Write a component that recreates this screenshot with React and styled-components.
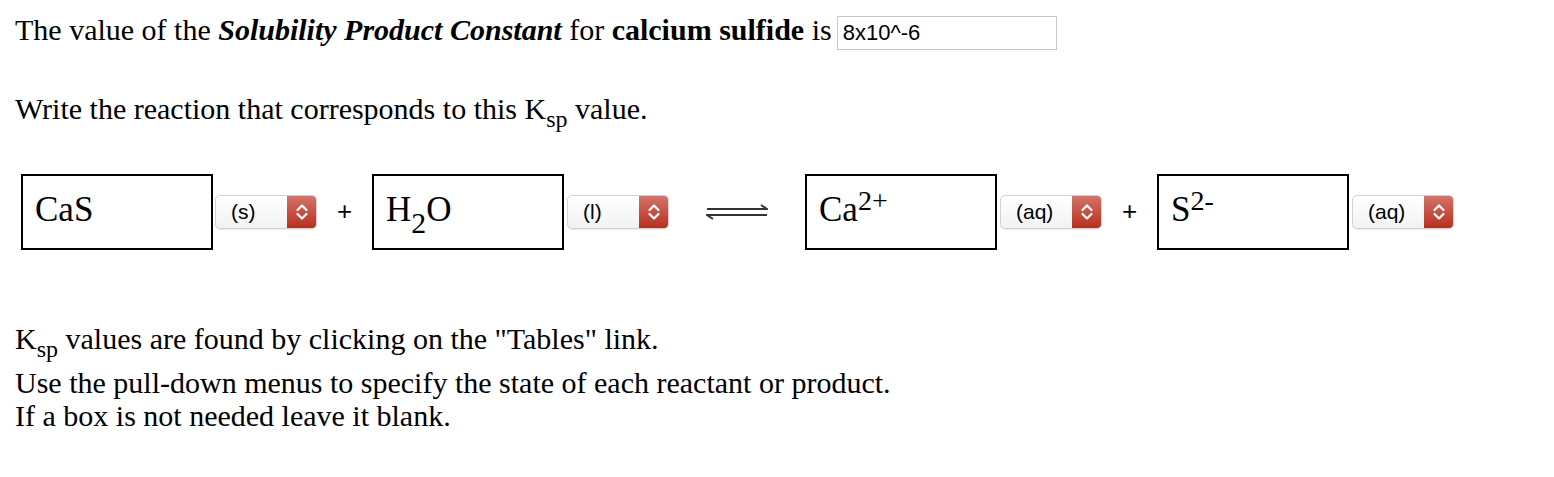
import React from 'react';
import styled, { createGlobalStyle } from 'styled-components';

const Global = createGlobalStyle`
  body {
    margin: 0;
    padding: 0 15px;
    background: #fff;
    color: #000;
    font-family: "Liberation Serif", "Times New Roman", serif;
    font-size: 30px;
  }
`;

const Para = styled.p`
  margin: ${p => p.top || 0}px 0 0 0;
  line-height: 33px;
`;

const Answer = styled.input`
  box-sizing: border-box;
  width: 220px;
  height: 34px;
  margin-left: 5px;
  padding: 0 5px;
  border: 1px solid #c6c6c6;
  font-family: "Liberation Sans", Arial, sans-serif;
  font-size: 22px;
  color: #000;
  outline: none;
`;

const Sub = styled.sub`
  font-size: 0.8em;
  vertical-align: -0.33em;
  line-height: inherit;
`;

// subscript inside a formula box: lower, and kept out of the line height
const FormulaSub = styled.sub`
  font-size: 0.85em;
  vertical-align: -0.42em;
  line-height: 0;
`;

const Sup = styled.sup`
  font-size: 0.8em;
  vertical-align: 0.4em;
  line-height: 0;
`;

const Equation = styled.div`
  display: flex;
  align-items: center;
  margin: 38px 0 0 6px;
`;

const Species = styled.div`
  box-sizing: border-box;
  width: 192px;
  height: 76px;
  border: 2px solid #000;
  padding: 14px 12px 0;
  font-size: 35px;
  line-height: normal;
  white-space: nowrap;
`;

const StateWrap = styled.div`
  display: flex;
  box-sizing: border-box;
  width: 102px;
  height: 34px;
  margin-left: ${p => p.gap || 2}px;
  border: 1px solid #d2d2d2;
  border-radius: 5px;
  overflow: hidden;
  background: linear-gradient(#ffffff, #f2f2f2);
  box-shadow: 0 1px 1px rgba(0, 0, 0, 0.08);
`;

const StateSelect = styled.select`
  appearance: none;
  flex: 1;
  min-width: 0;
  border: none;
  background: transparent;
  padding: 0 0 0 15px;
  font-family: "Liberation Sans", Arial, sans-serif;
  font-size: 21px;
  color: #000;
  outline: none;
`;

const Stepper = styled.span`
  display: flex;
  align-items: center;
  justify-content: center;
  width: 29px;
  background: linear-gradient(#d27468, #b8301f);
`;

const Plus = styled.span`
  width: 55px;
  text-align: center;
  font-family: "Liberation Sans", Arial, sans-serif;
  font-size: 26px;
`;

const Equil = styled.span`
  display: flex;
  justify-content: center;
  width: 136px;
`;

const Notes = styled.div`
  margin-top: 72px;
`;

const StateBox = ({ value, options, gap }) => (
  <StateWrap gap={gap}>
    <StateSelect defaultValue={value}>
      {options.map(o => (
        <option key={o}>{o}</option>
      ))}
    </StateSelect>
    <Stepper>
      <svg width="14" height="20" viewBox="0 0 14 20">
        <path d="M2.5 8 L7 3.5 L11.5 8 M2.5 12 L7 16.5 L11.5 12" fill="none" stroke="#fff" strokeWidth="2.2" strokeLinecap="round" strokeLinejoin="round" />
      </svg>
    </Stepper>
  </StateWrap>
);

const states = ['(s)', '(l)', '(g)', '(aq)'];

export default function App() {
  return (
    <>
      <Global />
      <Para top={13}>
        The value of the <b><i>Solubility Product Constant</i></b> for <b>calcium sulfide</b> is
        <Answer defaultValue="8x10^-6" />
      </Para>
      <Para top={42}>
        Write the reaction that corresponds to this K<Sub>sp</Sub> value.
      </Para>
      <Equation>
        <Species>CaS</Species>
        <StateBox value="(s)" options={states} />
        <Plus>+</Plus>
        <Species>H<FormulaSub>2</FormulaSub>O</Species>
        <StateBox value="(l)" options={states} gap={3} />
        <Equil>
          <svg width="62" height="16" viewBox="0 0 62 16">
            <path d="M1 5 H61 L55 1" fill="none" stroke="#333" strokeWidth="2" />
            <path d="M61 11 H1 L7 15" fill="none" stroke="#333" strokeWidth="2" />
          </svg>
        </Equil>
        <Species>Ca<Sup>2+</Sup></Species>
        <StateBox value="(aq)" options={states} gap={3} />
        <Plus>+</Plus>
        <Species>S<Sup>2-</Sup></Species>
        <StateBox value="(aq)" options={states} gap={3} />
      </Equation>
      <Notes>
        <Para>K<Sub>sp</Sub> values are found by clicking on the "Tables" link.</Para>
        <Para>Use the pull-down menus to specify the state of each reactant or product.</Para>
        <Para>If a box is not needed leave it blank.</Para>
      </Notes>
    </>
  );
}
